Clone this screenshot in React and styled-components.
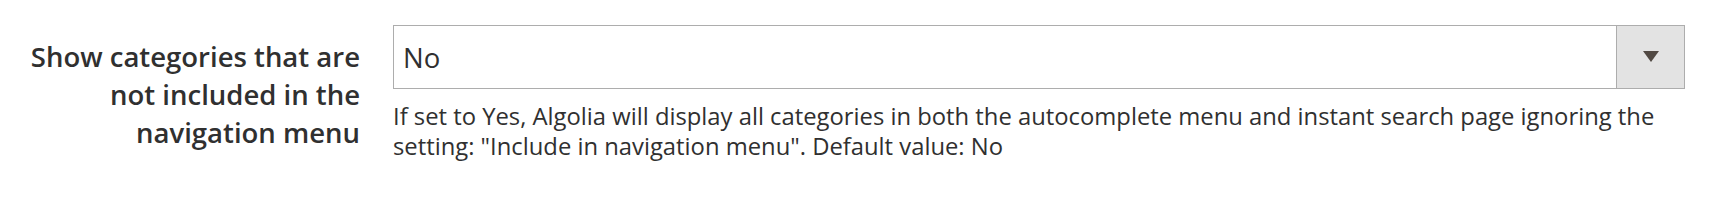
import React from 'react';
import styled, { createGlobalStyle } from 'styled-components';

const GlobalStyle = createGlobalStyle`
  body {
    margin: 0;
    background: #fff;
    font-family: "Open Sans", "Liberation Sans", sans-serif;
    color: #303030;
  }
`;

function App() {
  return (
    <>
      <GlobalStyle />
      <Field>
        <Label>Show categories that are not included in the navigation menu</Label>
        <Control>
          <SelectWrap>
            <Select defaultValue="0">
              <option value="1">Yes</option>
              <option value="0">No</option>
            </Select>
            <SelectButton>
              <Arrow />
            </SelectButton>
          </SelectWrap>
          <Note>
            If set to Yes, Algolia will display all categories in both the autocomplete menu and
            instant search page ignoring the setting: "Include in navigation menu". Default value: No
          </Note>
        </Control>
      </Field>
    </>
  );
}

const Field = styled.div`
  display: flex;
  align-items: flex-start;
  gap: 33px;
  padding: 25px 35px 20px 20px;
`;

const Label = styled.label`
  flex: 0 0 340px;
  text-align: right;
  font-size: 27.5px;
  font-weight: 600;
  line-height: 38px;
  padding-top: 13px;
  color: #303030;
`;

const Control = styled.div`
  flex: 1;
  min-width: 0;
`;

const SelectWrap = styled.div`
  position: relative;
  display: flex;
  height: 64px;
  border: 1px solid #adadad;
  box-sizing: border-box;
  background: #fff;
`;

const Select = styled.select`
  appearance: none;
  -webkit-appearance: none;
  flex: 1;
  border: 0;
  outline: none;
  background: transparent;
  font-family: "Open Sans", "Liberation Sans", sans-serif;
  font-size: 27.5px;
  color: #303030;
  padding: 0 0 0 9px;
  margin: 0;
`;

const SelectButton = styled.div`
  flex: 0 0 67px;
  display: flex;
  align-items: center;
  justify-content: center;
  background: #e3e3e3;
  border-left: 1px solid #adadad;
  pointer-events: none;
`;

const Arrow = styled.span`
  width: 0;
  height: 0;
  border-left: 8px solid transparent;
  border-right: 8px solid transparent;
  border-top: 11px solid #514943;
  margin-top: -2px;
`;

const Note = styled.div`
  margin-top: 12px;
  font-size: 23.8px;
  line-height: 30px;
  color: #303030;
`;

export default App;
